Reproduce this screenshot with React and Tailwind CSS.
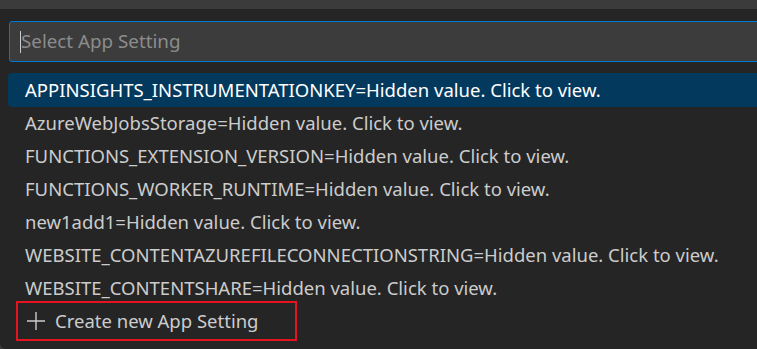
import React from "react";

const rows = [
  "APPINSIGHTS_INSTRUMENTATIONKEY=Hidden value. Click to view.",
  "AzureWebJobsStorage=Hidden value. Click to view.",
  "FUNCTIONS_EXTENSION_VERSION=Hidden value. Click to view.",
  "FUNCTIONS_WORKER_RUNTIME=Hidden value. Click to view.",
  "new1add1=Hidden value. Click to view.",
  "WEBSITE_CONTENTAZUREFILECONNECTIONSTRING=Hidden value. Click to view.",
  "WEBSITE_CONTENTSHARE=Hidden value. Click to view.",
];

export default function App() {
  return (
    <div
      className="w-[757px] h-[349px] overflow-hidden bg-[#3b3b3b] flex flex-col"
      style={{ fontFamily: '"Noto Sans", "Open Sans", sans-serif' }}
    >
      <div className="h-[9px] shrink-0 bg-[#3b3b3b]" />
      <div className="flex-1 bg-[#252526] rounded-bl-[6px] flex flex-col pt-[12px] pl-[8px]">
        <div className="ml-[1px] mr-[-10px] h-[41px] shrink-0 rounded-[3px] border border-[#0078d4] bg-[#3c3c3c] flex items-center pl-[10px]">
          <span className="w-px h-[22px] bg-[#cccccc]" />
          <span className="text-[18.8px] text-[#8c8c8c] leading-none">Select App Setting</span>
        </div>
        <div className="mt-[11px] flex flex-col">
          {rows.map((r, i) => (
            <div
              key={i}
              className={
                i === 0
                  ? "h-[34px] mb-[-1px] flex items-center pl-[17px] text-[18.5px] text-white bg-[#04395e] rounded-l-[4px] whitespace-nowrap"
                  : "h-[33px] flex items-center pl-[17px] text-[18.5px] text-[#cccccc] whitespace-nowrap"
              }
            >
              {r}
            </div>
          ))}
          <div className="ml-[8px] mt-[-3px] w-[281px] h-[40px] border-2 border-[#e5141f] flex items-center pl-[8px] text-[18.5px] text-[#cccccc] whitespace-nowrap">
            <svg width="20" height="20" viewBox="0 0 20 20" className="mr-[9px]">
              <path d="M10 1v18M1 10h18" stroke="#cccccc" strokeWidth="1.4" />
            </svg>
            Create new App Setting
          </div>
        </div>
      </div>
    </div>
  );
}
